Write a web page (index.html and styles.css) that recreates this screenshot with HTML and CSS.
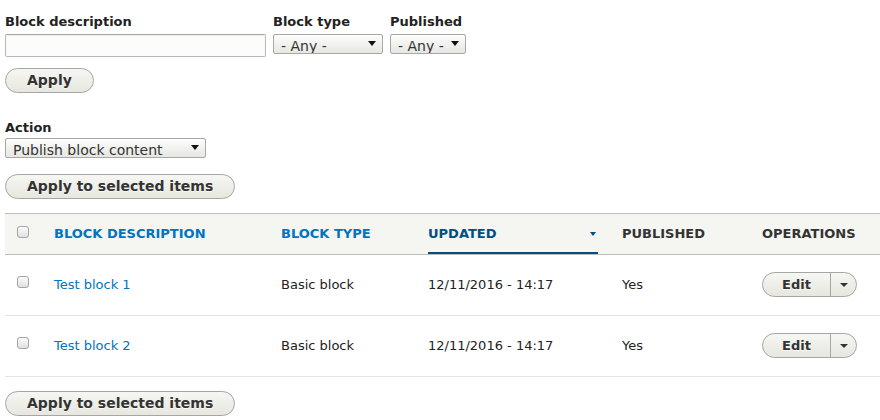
FILE: index.html
```html
<!DOCTYPE html>
<html lang="en">
<head>
<meta charset="utf-8">
<title>Custom block library</title>
<link rel="stylesheet" href="styles.css">
</head>
<body>
<form class="page">
  <div class="filters">
    <div class="field">
      <label class="label" for="f-desc">Block description</label>
      <input class="text-input" id="f-desc" type="text">
    </div>
    <div class="field">
      <label class="label" for="f-type">Block type</label>
      <span class="select-wrap"><select class="select select-type" id="f-type"><option>- Any -</option></select></span>
    </div>
    <div class="field">
      <label class="label" for="f-pub">Published</label>
      <span class="select-wrap"><select class="select select-pub" id="f-pub"><option>- Any -</option></select></span>
    </div>
  </div>
  <div class="button-row apply-row"><button class="button" type="button">Apply</button></div>

  <div class="bulk">
    <label class="label label-action" for="f-action">Action</label>
    <span class="select-wrap"><select class="select select-action" id="f-action"><option>Publish block content</option></select></span>
    <div class="button-row bulk-row"><button class="button" type="button">Apply to selected items</button></div>
  </div>

  <table class="table">
    <thead>
      <tr>
        <th class="col-check"><input class="checkbox checkbox-head" type="checkbox"></th>
        <th class="col-desc"><a href="#">Block description</a></th>
        <th class="col-type"><a href="#">Block type</a></th>
        <th class="col-updated is-active"><a href="#"><span>Updated</span><span class="sort-arrow"></span></a></th>
        <th class="col-pub">Published</th>
        <th class="col-ops">Operations</th>
      </tr>
    </thead>
    <tbody>
      <tr>
        <td><input class="checkbox" type="checkbox"></td>
        <td><a href="#">Test block 1</a></td>
        <td>Basic block</td>
        <td>12/11/2016 - 14:17</td>
        <td>Yes</td>
        <td><span class="dropbutton"><a class="dropbutton-action" href="#">Edit</a><span class="dropbutton-toggle"><span class="toggle-arrow"></span></span></span></td>
      </tr>
      <tr>
        <td><input class="checkbox" type="checkbox"></td>
        <td><a href="#">Test block 2</a></td>
        <td>Basic block</td>
        <td>12/11/2016 - 14:17</td>
        <td>Yes</td>
        <td><span class="dropbutton"><a class="dropbutton-action" href="#">Edit</a><span class="dropbutton-toggle"><span class="toggle-arrow"></span></span></span></td>
      </tr>
    </tbody>
  </table>

  <div class="button-row footer-row"><button class="button" type="button">Apply to selected items</button></div>
</form>
</body>
</html>
```

FILE: styles.css
```css
* { box-sizing: border-box; }

body {
  margin: 0;
  padding: 0 0 0 5px;
  font-family: "DejaVu Sans", "Liberation Sans", sans-serif;
  font-size: 13px;
  color: #222;
  background: #fff;
}

.page { margin: 0; }

.filters {
  display: flex;
  gap: 7px;
  padding-top: 13px;
}

.field {
  display: flex;
  flex-direction: column;
  align-items: flex-start;
}

.label {
  font-weight: bold;
  font-size: 13px;
  line-height: 18px;
  margin-bottom: 3px;
  color: #222;
}

.label-action {
  margin-top: 2px;
  margin-bottom: 1px;
}

.text-input {
  width: 261px;
  height: 23px;
  margin: 0;
  padding: 2px 6px;
  border: 1px solid #b8b8b8;
  border-top-color: #a4a4a4;
  border-radius: 2px;
  background: #fcfcfa;
  font: inherit;
  box-shadow: inset 0 1px 2px rgba(0, 0, 0, 0.06);
}

.select-wrap {
  position: relative;
  display: inline-block;
}

.select-wrap::after {
  content: "";
  position: absolute;
  right: 7px;
  top: 7px;
  border-left: 4px solid transparent;
  border-right: 4px solid transparent;
  border-top: 5px solid #111;
  pointer-events: none;
}

.select {
  -webkit-appearance: none;
  appearance: none;
  display: block;
  height: 20px;
  margin: 0;
  padding: 3px 20px 0 7px;
  border: 1px solid #a8a8a8;
  border-radius: 2px;
  background: linear-gradient(#fdfdfd, #e6e6e2);
  font-family: inherit;
  font-size: 14px;
  line-height: normal;
  color: #333;
}

.select-type { width: 110px; }
.select-pub { width: 76px; }
.select-action { width: 201px; }

.button-row { display: flex; }
.apply-row { margin-top: 11px; }

.button {
  margin: 0;
  padding: 4px 21px;
  border: 1px solid #a6a6a6;
  border-radius: 20em;
  background: linear-gradient(#f6f6f3, #e7e7df);
  font-family: inherit;
  font-size: 14px;
  font-weight: bold;
  line-height: 15px;
  color: #333;
  text-shadow: 0 1px rgba(255, 255, 255, 0.6);
  cursor: pointer;
}

.bulk {
  margin-top: 24px;
  display: flex;
  flex-direction: column;
  align-items: flex-start;
}

.bulk-row { margin-top: 16px; }

.table {
  margin-top: 14px;
  width: 100%;
  border-collapse: separate;
  border-spacing: 0;
  table-layout: fixed;
}

.col-check { width: 37px; }
.col-desc { width: 227px; }
.col-type { width: 147px; }
.col-updated { width: 194px; }
.col-pub { width: 140px; }

.table th {
  height: 42px;
  padding: 0 12px 1px;
  background: #f5f5f2;
  border-top: 1px solid #bfbfba;
  border-bottom: 1px solid #bfbfba;
  text-align: left;
  vertical-align: middle;
  font-size: 13px;
  font-weight: bold;
  text-transform: uppercase;
  color: #333;
  white-space: nowrap;
}

.table th a {
  color: #0074bd;
  text-decoration: none;
}

.table th.is-active {
  background: linear-gradient(#004f80, #004f80) 12px 100% / calc(100% - 24px) 2px no-repeat, #f5f5f2;
}

.table th.is-active a {
  color: #004f80;
  display: flex;
  align-items: center;
  justify-content: space-between;
}

.sort-arrow {
  width: 0;
  height: 0;
  margin-right: 2px;
  border-left: 3.5px solid transparent;
  border-right: 3.5px solid transparent;
  border-top: 4px solid #004f80;
}

.table td {
  height: 61px;
  padding: 0 12px 1px;
  border-bottom: 1px solid #e6e4df;
  vertical-align: middle;
  color: #222;
  white-space: nowrap;
}

.table td a {
  color: #0074bd;
  text-decoration: none;
}

.checkbox {
  -webkit-appearance: none;
  appearance: none;
  display: block;
  width: 12px;
  height: 12px;
  margin: 0 0 6px;
  border: 1px solid #a4a4a4;
  border-radius: 3px;
  background: linear-gradient(#fbfbfb, #e0e0e0);
}

.checkbox-head { margin-bottom: 3px; }

.dropbutton {
  display: inline-flex;
  height: 25px;
  vertical-align: middle;
  border: 1px solid #a6a6a6;
  border-radius: 20em;
  background: linear-gradient(#f6f6f3, #e7e7df);
}

.table td a.dropbutton-action {
  width: 67px;
  display: flex;
  align-items: center;
  justify-content: center;
  font-size: 13px;
  font-weight: bold;
  color: #333;
  text-shadow: 0 1px rgba(255, 255, 255, 0.6);
}

.dropbutton-toggle {
  width: 26px;
  border-left: 1px solid #a6a6a6;
  display: flex;
  align-items: center;
  justify-content: center;
}

.toggle-arrow {
  width: 0;
  height: 0;
  margin-left: 1px;
  border-left: 4px solid transparent;
  border-right: 4px solid transparent;
  border-top: 4px solid #333;
}

.footer-row { margin-top: 14px; }
```
